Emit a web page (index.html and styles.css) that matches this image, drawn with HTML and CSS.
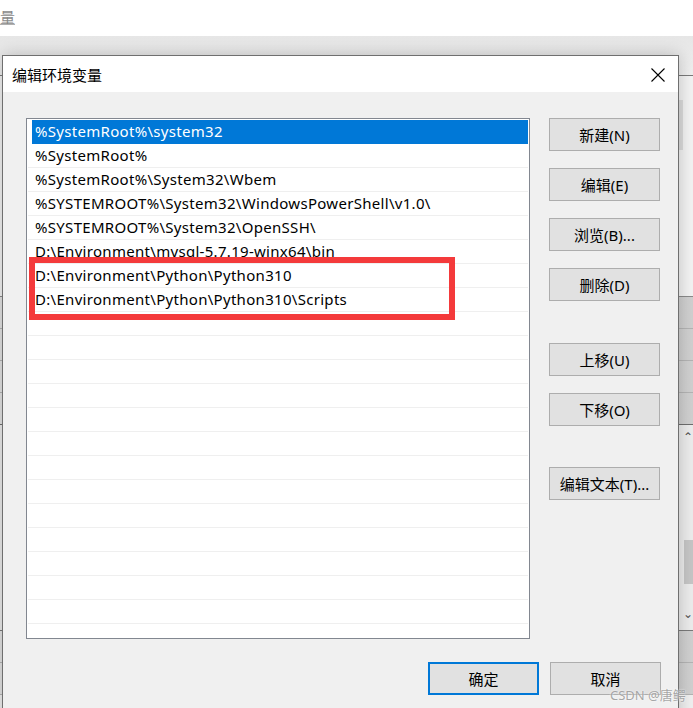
FILE: index.html
```html
<!DOCTYPE html>
<html lang="zh-CN">
<head>
    <meta charset="UTF-8">
    <title>编辑环境变量</title>
    <link rel="stylesheet" href="styles.css">
</head>
<body>
    <div class="desk-top">
        <span class="desk-title">量</span>
    </div>

    <!-- the window behind, only its right edge shows -->
    <div class="back-win">
        <div class="bw-band bw-head"></div>
        <div class="bw-band bw-light"><span class="bw-thumb"></span></div>
        <div class="bw-band bw-row"></div>
        <div class="bw-band bw-row"></div>
        <div class="bw-band bw-row"></div>
        <div class="bw-band bw-row"></div>
        <div class="bw-band bw-scroll">
            <span class="bw-arrow up">&#8963;</span>
            <span class="bw-thumb2"></span>
            <span class="bw-arrow down">&#8964;</span>
        </div>
        <div class="bw-band bw-row"></div>
        <div class="bw-band bw-row"></div>
    </div>

    <div class="dialog">
        <div class="title-bar">
            <span class="title">编辑环境变量</span>
            <svg class="close" width="14" height="14" viewBox="0 0 14 14">
                <path d="M0.5 0.5 L13.5 13.5 M13.5 0.5 L0.5 13.5" stroke="#000" stroke-width="1.1" fill="none"/>
            </svg>
        </div>

        <div class="dialog-body">
            <div class="list" id="path-list">
                <div class="mark"></div>
            </div>

            <div class="side-buttons">
                <button class="btn">新建(N)</button>
                <button class="btn">编辑(E)</button>
                <button class="btn">浏览(B)...</button>
                <button class="btn">删除(D)</button>
                <button class="btn gap-big">上移(U)</button>
                <button class="btn">下移(O)</button>
                <button class="btn gap-huge">编辑文本(T)...</button>
            </div>
        </div>

        <div class="footer">
            <button class="btn default">确定</button>
            <button class="btn">取消</button>
        </div>
    </div>

    <div class="watermark">CSDN @唐鳄</div>

    <script>
        var paths = [
            '%SystemRoot%\\system32',
            '%SystemRoot%',
            '%SystemRoot%\\System32\\Wbem',
            '%SYSTEMROOT%\\System32\\WindowsPowerShell\\v1.0\\',
            '%SYSTEMROOT%\\System32\\OpenSSH\\',
            'D:\\Environment\\mysql-5.7.19-winx64\\bin',
            'D:\\Environment\\Python\\Python310',
            'D:\\Environment\\Python\\Python310\\Scripts'
        ];
        var list = document.getElementById('path-list');
        for (var i = 0; i < 22; i++) {
            var row = document.createElement('div');
            row.className = 'row' + (i === 0 ? ' selected' : '');
            var cell = document.createElement('div');
            cell.className = 'cell';
            cell.textContent = paths[i] || '';
            row.appendChild(cell);
            list.appendChild(row);
        }
    </script>
</body>
</html>
```

FILE: styles.css
```css
body {
    margin: 0;
    width: 693px;
    height: 708px;
    overflow: hidden;
    position: relative;
    background: #f0f0f0;
    font-family: "Noto Sans", "Noto Sans CJK SC", sans-serif;
    font-size: 15px;
    color: #000;
}

.desk-top {
    height: 36px;
    background: #fff;
}
.desk-title {
    display: inline-block;
    margin: 6px 0 0 0;
    color: #8a8a8a;
    font-size: 15px;
    text-decoration: underline;
    text-decoration-color: #b0b0b0;
}

/* background window */
.back-win {
    position: absolute;
    left: 0;
    top: 36px;
    right: 0;
    bottom: 0;
    display: flex;
    flex-direction: column;
    background: linear-gradient(#e6e6e6, #f0f0f0 40px);
}
.bw-band {
    border-bottom: 1px solid #a0a0a0;
}
.bw-head { height: 39px; border-bottom-color: #7a7a7a; }
.bw-light {
    height: 220px;
    background: #f3f3f3;
    position: relative;
    border-bottom-color: #8a8a8a;
}
.bw-thumb {
    position: absolute;
    right: 10px;
    top: 24px;
    width: 5px;
    height: 50px;
    background: #dcdcdc;
}
.bw-row {
    height: 31px;
    background: linear-gradient(90deg, #e4e4e4, #d0d0d0);
    border-bottom-color: #b4b4b4;
}
.bw-row:nth-of-type(6) { border-bottom-color: #6e6e6e; }
.bw-scroll {
    height: 205px;
    background: #ececec;
    position: relative;
    border-bottom-color: #7a7a7a;
}
.bw-arrow {
    position: absolute;
    right: 0;
    width: 10px;
    font-size: 12px;
    line-height: 12px;
    color: #555;
}
.bw-arrow.up { top: 6px; }
.bw-arrow.down { bottom: 10px; }
.bw-thumb2 {
    position: absolute;
    right: 0;
    top: 115px;
    width: 9px;
    height: 44px;
    background: #c6c6c6;
}

/* dialog window */
.dialog {
    position: absolute;
    left: 2px;
    top: 55px;
    width: 675px;
    height: 680px;
    background: #f0f0f0;
    border: 1px solid #6f6f6f;
    box-shadow: 0 0 16px rgba(0, 0, 0, 0.22);
}
.title-bar {
    height: 36px;
    background: #fff;
    display: flex;
    align-items: center;
    justify-content: space-between;
    padding: 0 13px 0 9px;
}
.title {
    font-size: 15px;
}
.close {
    display: block;
    margin-top: 1px;
}

.dialog-body {
    display: flex;
    gap: 19px;
    padding: 26px 0 0 23px;
}
.list {
    position: relative;
    width: 502px;
    height: 518px;
    padding-top: 1px;
    box-sizing: content-box;
    background: #fff;
    border: 1px solid #828790;
    overflow: hidden;
}
.row {
    display: flex;
    padding-left: 4px;
    margin-left: 1px;
    margin-right: 1px;
    border-bottom: 1px solid #efefef;
}
.cell {
    flex: 1;
    height: 23px;
    line-height: 23px;
    padding-left: 3px;
    white-space: nowrap;
    letter-spacing: 0.3px;
}
.row.selected {
    border-bottom-color: transparent;
}
.row.selected .cell {
    background: #0078d7;
    color: #fff;
    height: 24px;
    margin-bottom: -1px;
}
.mark {
    position: absolute;
    left: 2px;
    top: 138px;
    width: 414px;
    height: 51px;
    border: 6px solid #f43a3b;
    z-index: 1;
}

.side-buttons {
    display: flex;
    flex-direction: column;
    gap: 17px;
}
.btn {
    width: 111px;
    height: 33px;
    box-sizing: border-box;
    background: #e1e1e1;
    border: 1px solid #adadad;
    font-family: inherit;
    font-size: 15px;
    color: #000;
    padding: 0;
}
.side-buttons .gap-big { margin-top: 25px; }
.side-buttons .gap-huge { margin-top: 24px; }
.btn.default {
    border: 2px solid #0078d7;
}

.footer {
    display: flex;
    justify-content: flex-end;
    gap: 11px;
    padding: 23px 17px 0 0;
}

.watermark {
    position: absolute;
    left: 610px;
    top: 685px;
    font-size: 13px;
    color: rgba(150, 150, 150, 0.85);
    text-shadow: 0 0 2px #fff;
    white-space: nowrap;
}
```
